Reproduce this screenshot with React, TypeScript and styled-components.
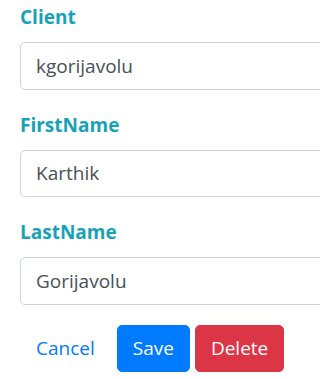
import React, { useState } from 'react';
import styled, { createGlobalStyle } from 'styled-components';

const GlobalStyle = createGlobalStyle`
    html, body {
        margin: 0;
        padding: 0;
        background: #fff;
        overflow: hidden;
    }
    body {
        font-family: "Open Sans", "Liberation Sans", sans-serif;
        font-size: 19px;
        line-height: 30px;
        color: #212529;
    }
    * {
        box-sizing: border-box;
    }
`;

export default function App() {
    const [client, setClient] = useState('kgorijavolu');
    const [firstName, setFirstName] = useState('Karthik');
    const [lastName, setLastName] = useState('Gorijavolu');

    return (
        <Viewport>
            <GlobalStyle />
            <FormContainer onSubmit={(e) => e.preventDefault()}>
                <FormGroup>
                    <Label htmlFor="client">Client</Label>
                    <Input id="client" value={client} onChange={(e) => setClient(e.target.value)} />
                </FormGroup>
                <FormGroup>
                    <Label htmlFor="firstName">FirstName</Label>
                    <Input id="firstName" value={firstName} onChange={(e) => setFirstName(e.target.value)} />
                </FormGroup>
                <FormGroup>
                    <Label htmlFor="lastName">LastName</Label>
                    <Input id="lastName" value={lastName} onChange={(e) => setLastName(e.target.value)} />
                </FormGroup>
                <ButtonRow>
                    <Button type="button" variant="link">Cancel</Button>
                    <Button type="submit" variant="primary">Save</Button>
                    <Button type="button" variant="danger">Delete</Button>
                </ButtonRow>
            </FormContainer>
        </Viewport>
    );
};

const Viewport = styled.div`
    width: 100vw;
    height: 100vh;
    overflow: hidden;
`;

const FormContainer = styled.form`
    width: 340px;
    padding: 2px 0 0 20px;
`;

const FormGroup = styled.div`
    margin-bottom: 20px;
`;

const Label = styled.label`
    display: block;
    margin-bottom: 10px;
    color: #17a2b8;
    font-weight: 700;
    line-height: 30px;
`;

const Input = styled.input`
    display: block;
    width: 100%;
    height: 47.5px;
    padding: 7.5px 15px;
    font-family: inherit;
    font-size: 19px;
    line-height: 30px;
    color: #495057;
    background: #fff;
    border: 1px solid #ced4da;
    border-radius: 5px;
    outline: none;
`;

const ButtonRow = styled.div`
    display: flex;
    align-items: center;
`;

const colors = {
    link: { bg: 'transparent', fg: '#007bff', border: 'transparent' },
    primary: { bg: '#007bff', fg: '#fff', border: '#007bff' },
    danger: { bg: '#dc3545', fg: '#fff', border: '#dc3545' },
};

const Button = styled.button<{ variant: keyof typeof colors }>`
    height: 47.5px;
    padding: 7.5px 15px;
    margin-right: ${(p) => (p.variant === 'link' ? '6px' : '5px')};
    font-family: inherit;
    font-size: 19px;
    line-height: 30px;
    color: ${(p) => colors[p.variant].fg};
    background: ${(p) => colors[p.variant].bg};
    border: 1px solid ${(p) => colors[p.variant].border};
    border-radius: 5px;
    cursor: pointer;
`;
